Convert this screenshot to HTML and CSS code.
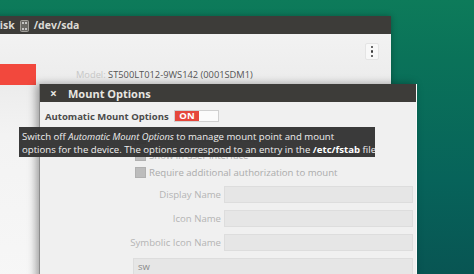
FILE: index.html
```html
<!DOCTYPE html>
<html>
<head>
<meta charset="utf-8">
<link rel="stylesheet" href="styles.css">
</head>
<body>
<div class="desktop">
  <div class="win back">
    <div class="titlebar back-title">
      <span class="t-text">Disk</span>
      <svg class="disk-ico" width="9" height="12" viewBox="0 0 9 12"><rect x="0.5" y="0.5" width="8" height="11" rx="1" fill="#6a6965" stroke="#a09e99"/><rect x="2" y="2" width="2" height="2" fill="#c4c4c4"/><rect x="5" y="2" width="2" height="2" fill="#c4c4c4"/><rect x="2" y="8" width="2" height="2" fill="#c4c4c4"/><rect x="5" y="8" width="2" height="2" fill="#c4c4c4"/></svg>
      <span class="t-text">/dev/sda</span>
    </div>
    <div class="back-body">
      <div class="back-top">
        <div class="kebab"><span></span><span></span><span></span></div>
      </div>
      <div class="back-row">
        <div class="redbar"></div>
        <div class="model"><span class="m-label">Model:</span> <span class="m-val">ST500LT012-9WS142 (0001SDM1)</span></div>
      </div>
    </div>
  </div>

  <div class="win dialog">
    <div class="titlebar dlg-title">
      <span class="close">×</span>
      <span class="dlg-name">Mount Options</span>
    </div>
    <div class="dlg-body">
      <div class="auto-row">
        <span class="auto-label">Automatic Mount Options</span>
        <div class="switch"><span class="sw-on">ON</span><span class="sw-off"></span></div>
      </div>
      <div class="checks">
        <div class="check"><span class="box"></span><span>Mount at system startup</span></div>
        <div class="check"><span class="box"></span><span>Show in user interface</span></div>
        <div class="check"><span class="box"></span><span>Require additional authorization to mount</span></div>
      </div>
      <div class="fields">
        <label class="f-label">Display Name</label><div class="entry"></div>
        <label class="f-label">Icon Name</label><div class="entry"></div>
        <label class="f-label">Symbolic Icon Name</label><div class="entry"></div>
      </div>
      <div class="entry wide">sw</div>
    </div>
  </div>

  <div class="tooltip">Switch off <i>Automatic Mount Options</i> to manage mount point and mount<br>options for the device. The options correspond to an entry in the <b>/etc/fstab</b> file</div>
</div>
</body>
</html>
```
FILE: styles.css
```css
html, body {
  margin: 0;
  padding: 0;
}
body {
  width: 474px;
  height: 274px;
  overflow: hidden;
  font-family: "Open Sans", "DejaVu Sans", sans-serif;
}
.desktop {
  position: relative;
  width: 474px;
  height: 274px;
  overflow: hidden;
  background: linear-gradient(180deg, #0d7b5a 0px, #0a7259 60px, #07635a 180px, #085553 274px);
}
.win {
  position: absolute;
}
.titlebar {
  background: #3d3c39;
  display: flex;
  align-items: center;
  color: #dcdad5;
  font-weight: 700;
  font-size: 10.5px;
  white-space: nowrap;
}
.back {
  left: -22px;
  top: 16px;
  width: 413px;
  height: 270px;
  box-shadow: 0 0 6px rgba(0,0,0,0.3);
}
.back-title {
  height: 18px;
  padding-left: 14px;
  gap: 5px;
}
.disk-ico {
  margin-top: 1px;
}
.back-body {
  background: linear-gradient(180deg, #f2f2f2 0%, #ececec 20%, #f3f3f3 40%, #f7f7f7 100%);
  height: 252px;
}
.back-top {
  height: 30px;
  display: flex;
  justify-content: flex-end;
  align-items: flex-start;
  padding-right: 12px;
}
.kebab {
  margin-top: 9px;
  width: 12px;
  height: 15px;
  background: #f8f8f8;
  border: 1px solid #e4e4e4;
  border-radius: 2px;
  display: flex;
  flex-direction: column;
  align-items: center;
  justify-content: center;
  gap: 2px;
}
.kebab span {
  width: 2.4px;
  height: 2.4px;
  border-radius: 50%;
  background: #3a3a3a;
}
.back-row {
  display: flex;
  align-items: flex-end;
}
.redbar {
  width: 58px;
  height: 21px;
  background: #f2483d;
}
.model {
  margin-left: 40px;
  font-size: 9.3px;
  line-height: 12px;
  margin-bottom: 4px;
  white-space: nowrap;
}
.m-label { color: #c8c8c8; }
.m-val { color: #555; }

.dialog {
  left: 39px;
  top: 84px;
  width: 376px;
  height: 200px;
  border-left: 1px solid #8c8c8c;
  border-right: 1px solid #fafafa;
  box-shadow: -3px 0 8px rgba(0,0,0,0.35);
  background: #f0f0f0;
}
.dlg-title {
  height: 18px;
  padding-left: 10px;
  color: #e8e6e1;
  font-size: 11px;
}
.close {
  font-size: 12px;
  width: 18px;
}
.dlg-body {
  padding: 6px 3px 0 5px;
  display: flex;
  flex-direction: column;
}
.auto-row {
  display: flex;
  align-items: center;
  height: 16px;
}
.auto-label {
  font-weight: 700;
  font-size: 9.5px;
  color: #4a4a4a;
  width: 129px;
  min-width: 0;
  flex: none;
  white-space: nowrap;
}
.switch {
  display: flex;
  height: 12px;
  width: 45px;
  border: 1px solid #d0d0d0;
  box-sizing: border-box;
}
.sw-on {
  background: #e5473b;
  color: #fff;
  font-weight: 700;
  font-size: 9.5px;
  width: 24px;
  display: flex;
  align-items: center;
  justify-content: center;
  line-height: 1;
}
.sw-off {
  flex: 1;
  background: #fbfbfb;
}
.checks {
  margin-top: 9px;
  padding-left: 90px;
  display: flex;
  flex-direction: column;
  gap: 6px;
}
.check {
  display: flex;
  align-items: center;
  gap: 3px;
  height: 11px;
  font-size: 9.6px;
  color: #ababab;
  white-space: nowrap;
}
.box {
  width: 11px;
  height: 11px;
  background: #bcbcbc;
  border: 1px solid #b0b0b0;
  box-sizing: border-box;
}
.fields {
  margin-top: 8px;
  display: grid;
  grid-template-columns: 176px 1fr;
  column-gap: 3px;
  row-gap: 7px;
  align-items: center;
}
.f-label {
  text-align: right;
  font-size: 9.6px;
  color: #b4b4b4;
  white-space: nowrap;
}
.entry {
  height: 17px;
  background: #e6e6e6;
  border: 1px solid #dddddd;
  box-sizing: border-box;
}
.wide {
  margin-top: 7px;
  margin-left: 88px;
  font-size: 9.5px;
  color: #8a8a8a;
  padding-left: 4px;
  line-height: 15px;
}
.tooltip {
  position: absolute;
  left: 19px;
  top: 127px;
  width: 356px;
  height: 30px;
  box-sizing: border-box;
  background: rgba(50,50,50,0.96);
  color: #efefef;
  font-size: 9.6px;
  line-height: 13px;
  padding: 3px 0 0 3px;
  white-space: nowrap;
}
.tooltip i { font-size: 9.3px; }
.tooltip b { color: #fff; }
```
